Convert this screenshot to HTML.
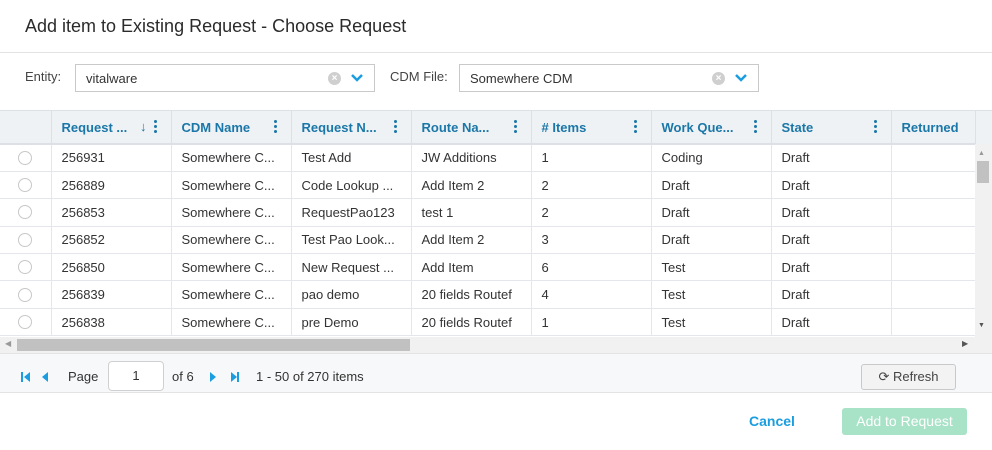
<!DOCTYPE html>
<html><head><meta charset="utf-8"><style>
*{box-sizing:border-box;margin:0;padding:0}
body{width:992px;height:450px;background:#fff;font-family:"Liberation Sans",sans-serif;font-size:13px;color:#333;position:relative;overflow:hidden}
.abs{position:absolute}
.title{left:25px;top:16px;font-size:18px;color:#2b2b2b}
.hline{left:0;width:992px;height:1px;background:#e3e3e3}
.lbl{font-size:13px;color:#444}
.sel{border:1px solid #c9c9c9;height:28px;background:#fff}
.sel span{position:absolute;left:10px;top:6px}
.clr{position:absolute;width:13px;height:13px;border-radius:50%;background:#cfcfcf;top:7px;color:#fff;font-size:10px;line-height:13px;text-align:center;font-weight:bold}
.chev{position:absolute;top:5px}
table{border-collapse:collapse;table-layout:fixed}
th{height:33px;background:#eff2f5;color:#1b77a8;font-weight:bold;text-align:left;padding-left:10px;border-right:1px solid #dde1e6;border-bottom:2px solid #dde1e6;font-size:13px;position:relative;white-space:nowrap}
td{height:27.4px;padding-left:10px;border-right:1px solid #e3e6ea;border-bottom:1px solid #e3e6ea;white-space:nowrap;overflow:hidden}
.dots{position:absolute;right:14px;top:9px;width:3px}
.dots i{display:block;width:3px;height:3px;border-radius:50%;background:#1b77a8;margin-bottom:2px}
.radio{width:14px;height:14px;border:1px solid #c8c8c8;border-radius:50%;margin-left:8px;background:#fff}
</style></head><body>
<div class="abs title">Add item to Existing Request - Choose Request</div>
<div class="abs hline" style="top:52px"></div>
<div class="abs lbl" style="left:25px;top:69px">Entity:</div>
<div class="abs sel" style="left:75px;top:64px;width:300px"><span>vitalware</span><div class="clr" style="left:252px">×</div>
<svg class="chev" style="left:274px" width="14" height="16" viewBox="0 0 14 16"><path d="M2 5l5 5 5-5" stroke="#1a9ee0" stroke-width="2.5" fill="none"/></svg></div>
<div class="abs lbl" style="left:390px;top:69px">CDM File:</div>
<div class="abs sel" style="left:459px;top:64px;width:300px"><span>Somewhere CDM</span><div class="clr" style="left:252px">×</div>
<svg class="chev" style="left:274px" width="14" height="16" viewBox="0 0 14 16"><path d="M2 5l5 5 5-5" stroke="#1a9ee0" stroke-width="2.5" fill="none"/></svg></div>

<div class="abs" style="left:0;top:110px;width:992px;height:243px;border-top:1px solid #dde1e6;overflow:hidden">
<div class="abs" style="left:975px;top:0;width:17px;height:33px;background:#eff2f5"></div>
<table class="abs" style="left:0;top:0;width:975px">
<colgroup><col style="width:51px"><col style="width:120px"><col style="width:120px"><col style="width:120px"><col style="width:120px"><col style="width:120px"><col style="width:120px"><col style="width:120px"><col style="width:84px"></colgroup>
<tr><th></th>
<th>Request ... <span style="position:absolute;right:24px;top:8px">↓</span><div class="dots"><i></i><i></i><i></i></div></th>
<th>CDM Name<div class="dots"><i></i><i></i><i></i></div></th>
<th>Request N...<div class="dots"><i></i><i></i><i></i></div></th>
<th>Route Na...<div class="dots"><i></i><i></i><i></i></div></th>
<th># Items<div class="dots"><i></i><i></i><i></i></div></th>
<th>Work Que...<div class="dots"><i></i><i></i><i></i></div></th>
<th>State<div class="dots"><i></i><i></i><i></i></div></th>
<th>Returned</th></tr>
<tr><td><div class="radio"></div></td><td>256931</td><td>Somewhere C...</td><td>Test Add</td><td>JW Additions</td><td>1</td><td>Coding</td><td>Draft</td><td></td></tr>
<tr><td><div class="radio"></div></td><td>256889</td><td>Somewhere C...</td><td>Code Lookup ...</td><td>Add Item 2</td><td>2</td><td>Draft</td><td>Draft</td><td></td></tr>
<tr><td><div class="radio"></div></td><td>256853</td><td>Somewhere C...</td><td>RequestPao123</td><td>test 1</td><td>2</td><td>Draft</td><td>Draft</td><td></td></tr>
<tr><td><div class="radio"></div></td><td>256852</td><td>Somewhere C...</td><td>Test Pao Look...</td><td>Add Item 2</td><td>3</td><td>Draft</td><td>Draft</td><td></td></tr>
<tr><td><div class="radio"></div></td><td>256850</td><td>Somewhere C...</td><td>New Request ...</td><td>Add Item</td><td>6</td><td>Test</td><td>Draft</td><td></td></tr>
<tr><td><div class="radio"></div></td><td>256839</td><td>Somewhere C...</td><td>pao demo</td><td>20 fields Routef</td><td>4</td><td>Test</td><td>Draft</td><td></td></tr>
<tr><td><div class="radio"></div></td><td>256838</td><td>Somewhere C...</td><td>pre Demo</td><td>20 fields Routef</td><td>1</td><td>Test</td><td>Draft</td><td></td></tr>
</table>
<div class="abs" style="left:975px;top:33px;width:17px;height:193px;background:#f1f1f1"></div>
<div class="abs" style="left:978px;top:39px;font-size:7px;color:#999">▲</div>
<div class="abs" style="left:977px;top:50px;width:12px;height:22px;background:#c1c1c1"></div>
<div class="abs" style="left:978px;top:211px;font-size:7px;color:#555">▼</div>
<div class="abs" style="left:0;top:226px;width:992px;height:17px;background:#f1f1f1"></div>
<div class="abs" style="left:17px;top:228px;width:393px;height:12px;background:#c1c1c1"></div>
<div class="abs" style="left:5px;top:228px;font-size:8px;color:#999">◀</div>
<div class="abs" style="left:962px;top:228px;font-size:8px;color:#555">▶</div>
</div>

<div class="abs" style="left:0;top:353px;width:992px;height:40px;background:#f7f8fa;border-top:1px solid #e3e3e3;border-bottom:1px solid #e3e3e3"></div>
<svg class="abs" style="left:21px;top:371px" width="40" height="12" viewBox="0 0 40 12"><rect x="0" y="1" width="2" height="10" fill="#1a9ee0"/><path d="M9 1v10L3 6z" fill="#1a9ee0"/><path d="M32 1v10l-6-5z" fill="#1a9ee0" transform="translate(-5 0)"/></svg>
<div class="abs" style="left:68px;top:369px">Page</div>
<div class="abs" style="left:108px;top:361px;width:56px;height:30px;border:1px solid #d0d0d0;border-radius:4px;background:#fff;text-align:center;line-height:28px">1</div>
<div class="abs" style="left:172px;top:369px">of 6</div>
<svg class="abs" style="left:209px;top:371px" width="36" height="12" viewBox="0 0 36 12"><path d="M1 1v10l6-5z" fill="#1a9ee0"/><path d="M22 1v10l6-5z" fill="#1a9ee0"/><rect x="28" y="1" width="2" height="10" fill="#1a9ee0"/></svg>
<div class="abs" style="left:256px;top:369px">1 - 50 of 270 items</div>
<div class="abs" style="left:861px;top:364px;width:95px;height:26px;border:1px solid #c9c9c9;border-radius:3px;background:#f3f3f3;text-align:center;line-height:24px;color:#444">⟳ Refresh</div>

<div class="abs" style="left:749px;top:413px;color:#1a9ee0;font-weight:bold;font-size:14px">Cancel</div>
<div class="abs" style="left:842px;top:408px;width:125px;height:27px;background:#a8e2c7;border-radius:3px;color:#fff;text-align:center;line-height:27px;font-size:14px">Add to Request</div>
</body></html>
